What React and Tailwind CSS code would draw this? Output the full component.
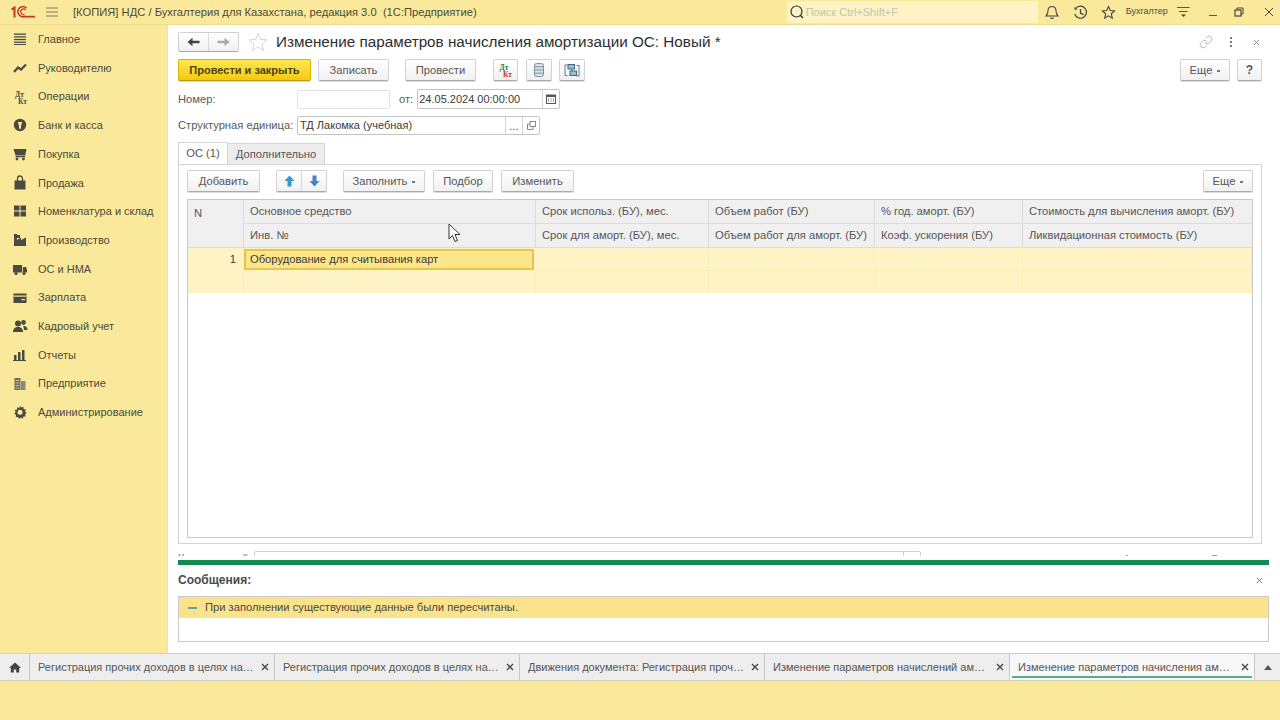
import React from "react";
import { Link } from "lucide-react";

const Ico = ({ children, w = 16, h = 16, vb = "0 0 16 16", cls = "" }) => (
  <svg width={w} height={h} viewBox={vb} className={cls}>{children}</svg>
);

const sideIcons = {
  main: <g fill="#4a4a40"><rect x="2" y="2.500" width="12" height="1.300"/><rect x="2" y="5.200" width="12" height="1.300"/><rect x="2" y="7.900" width="12" height="1.300"/><rect x="2" y="10.600" width="12" height="1.300"/><rect x="2" y="13" width="12" height="1"/></g>,
  boss: <path d="M2 12 L6 7.500 L9 9.500 L14 4.500" fill="none" stroke="#4a4a40" strokeWidth="2.200"/>,
  ops: <g fill="#4a4a40"><text x="3" y="7.500" fontSize="7.500" fontWeight="700" fontFamily="Liberation Serif, serif">Дт</text><text x="6" y="14.500" fontSize="7.500" fontWeight="700" fontFamily="Liberation Serif, serif">Кт</text></g>,
  bank: <g><circle cx="8" cy="8" r="6.200" fill="#4a4a40"/><path d="M5.800 5h4.400L9 9v2.800H7V9z" fill="#fbe99b"/></g>,
  buy: <g fill="#4a4a40"><path d="M1.500 3h13l-1.300 6.500H3.600z"/><rect x="3.600" y="10" width="9.500" height="1.200"/><circle cx="5" cy="13" r="1.400"/><circle cx="11.500" cy="13" r="1.400"/></g>,
  sell: <g><rect x="2.500" y="5.500" width="11" height="9" fill="#4a4a40"/><path d="M5.500 6V3.500a2.500 2.500 0 0 1 5 0V6" fill="none" stroke="#4a4a40" strokeWidth="1.300"/></g>,
  nom: <g fill="#4a4a40"><rect x="2" y="2.500" width="5.500" height="5"/><rect x="8.500" y="2.500" width="5.500" height="5"/><rect x="2" y="8.500" width="5.500" height="5"/><rect x="8.500" y="8.500" width="5.500" height="5"/></g>,
  prod: <g fill="#4a4a40"><path d="M2 14V2h3v1h3v3H5v2l4-2.500V8l5-2.500V14z"/></g>,
  os: <g fill="#4a4a40"><rect x="1" y="4" width="9" height="7.500"/><path d="M10.800 6H14l1 2.500v3h-4.200z"/><circle cx="4" cy="12.500" r="1.600"/><circle cx="12" cy="12.500" r="1.600"/></g>,
  pay: <g><rect x="1.500" y="3.500" width="13" height="9.500" fill="#4a4a40"/><rect x="1.500" y="5.500" width="13" height="1.200" fill="#fbe99b"/><rect x="9.500" y="9" width="3.500" height="1.200" fill="#fbe99b"/></g>,
  hr: <g fill="#4a4a40"><circle cx="6" cy="5.500" r="3"/><path d="M1 14c0-3.500 2-5 5-5s5 1.500 5 5z"/><circle cx="11.500" cy="4.500" r="2.400"/><path d="M11 8c2.500-.5 4.500 1 4.500 4H12c0-1.500-.4-3-1-4z"/></g>,
  rep: <g fill="#4a4a40"><rect x="2" y="8" width="2.500" height="5"/><rect x="6" y="5" width="2.500" height="8"/><rect x="10" y="3" width="2.500" height="10"/><rect x="1" y="13" width="13" height="1"/></g>,
  ent: <g><rect x="2.500" y="2" width="6" height="12" fill="#6b6b60"/><rect x="9" y="5" width="4.500" height="9" fill="#8a8a78"/><path d="M3.500 4.500h4M3.500 7h4M3.500 9.500h4M3.500 12h4" stroke="#fbe99b" strokeWidth=".7"/></g>,
  adm: <g><path d="M8 1.500l1.100 2 2.200-.7.300 2.300 2.300.4-.8 2.200 1.800 1.300-1.800 1.300.6 2.200-2.300.1-.6 2.200-2-1.200-1.800 1.400-1-2.100-2.300.2.400-2.300-2-1.100 1.600-1.600-1-2.100 2.300-.4.300-2.300 2.200.8z" fill="#4a4a40"/><circle cx="8" cy="8.300" r="2.500" fill="#fbe99b"/></g>,
};

const sideItems = [
  ["Главное", "main"], ["Руководителю", "boss"], ["Операции", "ops"], ["Банк и касса", "bank"],
  ["Покупка", "buy"], ["Продажа", "sell"], ["Номенклатура и склад", "nom"], ["Производство", "prod"],
  ["ОС и НМА", "os"], ["Зарплата", "pay"], ["Кадровый учет", "hr"], ["Отчеты", "rep"],
  ["Предприятие", "ent"], ["Администрирование", "adm"],
];

const Btn = ({ children, cls = "" }) => (
  <div className={`h-[22px] flex items-center justify-center rounded-[2px] border border-[#d2d2d2] border-b-[#aaaaaa] bg-gradient-to-b from-white to-[#f1f1f1] text-[#555] shadow-[0_1px_0_#dcdcdc] ${cls}`}>
    {children}
  </div>
);

const Caret = () => <span className="ml-[5px] mt-[1px] w-[3px] h-[2px] bg-[#777]" />;

const Cross = ({ s = 8, c = "#666", w = 1.1 }) => (
  <svg width={s} height={s} viewBox="0 0 8 8"><path d="M1 1l6 6M7 1l-6 6" stroke={c} strokeWidth={w} /></svg>
);

const cols = "grid-cols-[56px_292px_173px_166px_148px_1fr]";
const HCell = ({ children, cls = "" }) => (
  <div className={`flex items-center pl-[6px] border-r border-b border-[#dcdcdc] text-[#555] whitespace-nowrap ${cls}`}>{children}</div>
);

const tabs = [
  "Регистрация прочих доходов в целях начисления",
  "Регистрация прочих доходов в целях начисления",
  "Движения документа: Регистрация прочих доходов",
  "Изменение параметров начислений амортизации",
  "Изменение параметров начисления амортизации",
];

export default function App() {
  return (
    <div className="relative w-[1280px] h-[720px] overflow-hidden flex flex-col bg-[#fbe99b] text-[11.2px] text-[#444] font-['Liberation_Sans',Arial,sans-serif]">
      {/* Header */}
      <div className="h-[25px] shrink-0 flex items-center border-b border-[#efdc8e] bg-[#fbe99b]">
        <svg width="24" height="12" viewBox="0 0 24 12" className="ml-[11px]">
          <path d="M0.500 3.500L3.500 1.500V11.500" fill="none" stroke="#c8351e" strokeWidth="2" />
          <path d="M15.500 2.200A5 5 0 1 0 13 10.500" fill="none" stroke="#c8351e" strokeWidth="1.500" />
          <path d="M14.500 4A2.700 2.700 0 1 0 13.500 8.200" fill="none" stroke="#c8351e" strokeWidth="1.200" />
          <rect x="12" y="9.800" width="12" height="1.700" fill="#c8351e" />
        </svg>
        <svg width="12" height="10" viewBox="0 0 12 10" className="ml-[11px]">
          <path d="M0 1h12M0 5h12M0 9h12" stroke="#77776a" strokeWidth="1" />
        </svg>
        <div className="ml-[15px] text-[#4a4a3a] whitespace-pre">[КОПИЯ] НДС / Бухгалтерия для Казахстана, редакция 3.0  (1С:Предприятие)</div>
        <div className="ml-[310px] w-[251px] h-[22px] flex items-center rounded-[2px] bg-[#fdf3c5]">
          <svg width="16" height="16" viewBox="0 0 16 16" className="ml-[2px]">
            <circle cx="7.500" cy="7.500" r="5.500" fill="none" stroke="#333" strokeWidth="1.200" />
            <path d="M11.500 11.500l2.500 2.500" stroke="#333" strokeWidth="1.400" />
          </svg>
          <span className="ml-[1px] text-[11px] text-[#c6c3ae]">Поиск Ctrl+Shift+F</span>
        </div>
        <svg width="14" height="15" viewBox="0 0 14 15" className="ml-[7px]">
          <path d="M7 1.500c-2.500 0-4 1.800-4 4.300 0 3-1 4.200-2 5.200h12c-1-1-2-2.200-2-5.200 0-2.500-1.500-4.300-4-4.300zM5.500 12.500a1.600 1.600 0 0 0 3 0" fill="none" stroke="#444" strokeWidth="1.100" />
        </svg>
        <svg width="15" height="15" viewBox="0 0 15 15" className="ml-[14px]">
          <path d="M2.700 3.500A6 6 0 1 1 1.700 9" fill="none" stroke="#444" strokeWidth="1.200" />
          <path d="M1.500 1.800v3h3z" fill="#444" />
          <path d="M7.500 4v4l3 1.600" fill="none" stroke="#444" strokeWidth="1.300" />
        </svg>
        <svg width="15" height="15" viewBox="0 0 15 15" className="ml-[13px]">
          <path d="M7.500 1.500l1.800 4 4.300.4-3.300 2.900 1 4.300-3.800-2.300-3.800 2.300 1-4.300L1.400 5.900l4.300-.4z" fill="none" stroke="#444" strokeWidth="1.100" />
        </svg>
        <span className="ml-[10px] text-[9px] text-[#4a4a3a] w-[43px] whitespace-nowrap">Бухгалтер</span>
        <svg width="13" height="12" viewBox="0 0 13 12" className="ml-[8px]">
          <path d="M0 1.500h12.500M2 5.500h8.500" stroke="#555" strokeWidth="1" /><path d="M4 8.500h5l-2.500 2.500z" fill="#444" />
        </svg>
        <span className="ml-[19px] mt-[6px] w-[8px] h-[1px] bg-[#555]" />
        <svg width="10" height="10" viewBox="0 0 10 10" className="ml-[17px]">
          <rect x="1" y="3" width="6" height="6" fill="none" stroke="#444" strokeWidth="1.200" /><path d="M3 3V1h6v6H7" fill="none" stroke="#444" strokeWidth="1" />
        </svg>
        <svg width="10" height="10" viewBox="0 0 10 10" className="ml-[20px]"><path d="M1 1l8 8M9 1l-8 8" stroke="#444" strokeWidth="1" /></svg>
      </div>

      {/* Middle */}
      <div className="h-[628px] shrink-0 flex">
        <nav className="w-[168px] shrink-0 border-r border-[#e9e1b8] flex flex-col text-[11px]">
          {sideItems.map(([t, k]) => (
            <div key={t} className="h-[28.7px] shrink-0 flex items-center text-[#4a4a3a] whitespace-nowrap">
              <Ico cls="ml-[12px]">{sideIcons[k]}</Ico>
              <span className="ml-[10px]">{t}</span>
            </div>
          ))}
        </nav>

        <main className="flex-1 min-w-0 bg-white flex flex-col">
          <div className="h-[531px] shrink-0 overflow-hidden pl-[10px] pr-[18px]">
            {/* title row */}
            <div className="h-[20px] mt-[7px] flex items-center">
              <div className="w-[61px] h-[20px] flex rounded-[2px] border border-[#d0d0d0] border-b-[#a8a8a8] bg-gradient-to-b from-white to-[#f1f1f1]">
                <div className="w-[30px] flex items-center justify-center border-r border-[#d8d8d8]">
                  <svg width="13" height="10" viewBox="0 0 13 10"><path d="M0.500 5L5.500 0.800V3.800H12.500V6.200H5.500V9.200z" fill="#444" /></svg>
                </div>
                <div className="flex-1 flex items-center justify-center">
                  <svg width="13" height="10" viewBox="0 0 13 10"><path d="M12.500 5L7.500 0.800V3.800H0.500V6.200H7.500V9.200z" fill="#aaaaaa" /></svg>
                </div>
              </div>
              <svg width="20" height="20" viewBox="0 0 20 20" className="ml-[9px]">
                <path d="M10 1.500l2.500 6 6.500.4-5 4.200 1.600 6.400-5.600-3.500-5.600 3.500 1.600-6.400-5-4.200 6.500-.4z" fill="none" stroke="#d4d4d4" strokeWidth="1" />
              </svg>
              <h1 className="ml-[8px] text-[15.25px] leading-[20px] text-[#2e2e2e] whitespace-nowrap font-normal">Изменение параметров начисления амортизации ОС: Новый *</h1>
              <div className="ml-auto flex items-center mr-[2px]">
                <Link size={14} strokeWidth={1.3} color="#a0a0a0" />
                <svg width="4" height="10" viewBox="0 0 4 10" className="ml-[16px]"><g fill="#777"><rect x="1" y="0" width="2" height="2" /><rect x="1" y="4" width="2" height="2" /><rect x="1" y="8" width="2" height="2" /></g></svg>
                <span className="ml-[20px] flex"><Cross s={7} c="#888" /></span>
              </div>
            </div>

            {/* command bar */}
            <div className="mt-[7px] h-[22px] flex items-center">
              <div className="w-[133px] h-[22px] flex items-center justify-center rounded-[2px] border border-[#d6b400] border-b-[#b89b10] bg-gradient-to-b from-[#fde84a] to-[#f6c900] font-bold text-[11px] text-[#4a4215] shadow-[0_1px_0_#d8d8d8]">Провести и закрыть</div>
              <Btn cls="w-[71px] ml-[7px]">Записать</Btn>
              <Btn cls="w-[71px] ml-[16px]">Провести</Btn>
              <Btn cls="w-[25px] ml-[17px]">
                <svg width="15" height="15" viewBox="0 0 15 15"><text x="1.500" y="7" fontSize="7.500" fontWeight="700" fontFamily="Liberation Serif, serif" fill="#2d7d3a">Дт</text><text x="5" y="13.500" fontSize="7.500" fontWeight="700" fontFamily="Liberation Serif, serif" fill="#c8351e">Кт</text></svg>
              </Btn>
              <Btn cls="w-[26px] ml-[8px]">
                <svg width="12" height="16" viewBox="0 0 12 16"><rect x="1.500" y="1.500" width="9" height="13" rx="2" fill="#d6e3ea" stroke="#7b95a3" /><path d="M1.500 4.800h9M1.500 8h9M1.500 11.200h9" stroke="#7b95a3" /></svg>
              </Btn>
              <Btn cls="w-[26px] ml-[7px]">
                <svg width="16" height="15" viewBox="0 0 16 15"><path d="M3.500 2H1v10.500h2.500M12.500 2.500H15V13h-2.500" fill="none" stroke="#5d8296" /><rect x="4" y="1.500" width="6.500" height="4.500" fill="#9fbccb" stroke="#3f6b82" /><rect x="6" y="8" width="6.500" height="4.500" fill="#9fbccb" stroke="#3f6b82" /><path d="M8 6v2" stroke="#3f6b82" /></svg>
              </Btn>
              <Btn cls="w-[50px] ml-auto mr-[7px]">Еще<Caret /></Btn>
              <Btn cls="w-[25px] font-bold text-[12px]">?</Btn>
            </div>

            {/* number/date */}
            <div className="mt-[8px] h-[20px] flex items-center">
              <span className="w-[119px] text-[#5a5a5a]">Номер:</span>
              <div className="w-[93px] h-[19px] rounded-[2px] border border-[#e4e4e4]" />
              <span className="ml-[9px] text-[#5a5a5a]">от:</span>
              <div className="ml-[4px] w-[143px] h-[20px] flex rounded-[2px] border border-[#c4c4c4]">
                <span className="flex-1 pl-[1px] text-[11px] leading-[18px] text-[#3a3a3a] whitespace-nowrap">24.05.2024 00:00:00</span>
                <span className="w-[17px] border-l border-[#d4d4d4] flex items-center justify-center">
                  <svg width="10" height="10" viewBox="0 0 10 10"><rect x="0.500" y="1" width="9" height="8.500" fill="none" stroke="#555" /><rect x="0.500" y="1" width="9" height="2" fill="#555" /><path d="M2 5h1M4.500 5h1M7 5h1M2 7h1M4.500 7h1M7 7h1" stroke="#555" /></svg>
                </span>
              </div>
            </div>

            {/* unit */}
            <div className="mt-[7px] h-[19px] flex items-center">
              <span className="w-[119px] text-[#5a5a5a] whitespace-nowrap">Структурная единица:</span>
              <div className="w-[243px] h-[19px] flex rounded-[2px] border border-[#c4c4c4]">
                <span className="flex-1 pl-[2px] text-[11px] leading-[17px] text-[#3a3a3a]">ТД Лакомка (учебная)</span>
                <span className="w-[17px] border-l border-[#d4d4d4] text-center leading-[19px] text-[#555]">...</span>
                <span className="w-[17px] border-l border-[#d4d4d4] flex items-center justify-center">
                  <svg width="9" height="9" viewBox="0 0 9 9"><rect x="3" y="0.500" width="5.500" height="5" fill="none" stroke="#888" /><path d="M3 3H0.500V8.500H6V5.500" fill="none" stroke="#888" /></svg>
                </span>
              </div>
            </div>

            {/* Tabs */}
            <div className="mt-[8px] h-[21px] flex items-end relative z-10">
              <div className="w-[50px] h-[22px] flex items-center justify-center border border-b-0 border-[#d4d4d4] bg-white text-[#555]">ОС (1)</div>
              <div className="w-[97px] h-[21px] flex items-center justify-center border border-l-0 border-b-0 border-[#d4d4d4] bg-[#ececec] text-[#555]">Дополнительно</div>
            </div>

            {/* Tab panel */}
            <div className="h-[380px] border border-[#d4d4d4] pl-[8px] pr-[8px]">
              <div className="h-[22px] mt-[5px] flex items-center">
                <Btn cls="w-[73px]">Добавить</Btn>
                <div className="ml-[16px] w-[51px] h-[22px] flex rounded-[2px] border border-[#d2d2d2] border-b-[#aaaaaa] bg-gradient-to-b from-white to-[#f1f1f1] shadow-[0_1px_0_#dcdcdc]">
                  <span className="flex-1 flex items-center justify-center border-r border-[#d8d8d8]">
                    <svg width="11" height="12" viewBox="0 0 11 12"><path d="M5.500 0.500L10.500 6H7.500V11.500H3.500V6H0.500z" fill="#2f9bd1" /></svg>
                  </span>
                  <span className="flex-1 flex items-center justify-center">
                    <svg width="11" height="12" viewBox="0 0 11 12"><path d="M5.500 11.500L10.500 6H7.500V0.500H3.500V6H0.500z" fill="#3f85c8" /></svg>
                  </span>
                </div>
                <Btn cls="ml-[16px] w-[82px]">Заполнить<Caret /></Btn>
                <Btn cls="ml-[8px] w-[60px]">Подбор</Btn>
                <Btn cls="ml-[8px] w-[73px]">Изменить</Btn>
                <Btn cls="ml-auto w-[50px]">Еще<Caret /></Btn>
              </div>

              <div className="mt-[7px] h-[339px] border border-[#c8c8c8] overflow-hidden">
                <div className={`grid ${cols} grid-rows-[24px_24px] bg-[#f0f0f0]`}>
                  <HCell cls="row-span-2 items-start pt-[5px]">N</HCell>
                  <HCell>Основное средство</HCell>
                  <HCell>Срок использ. (БУ), мес.</HCell>
                  <HCell>Объем работ (БУ)</HCell>
                  <HCell>% год. аморт. (БУ)</HCell>
                  <HCell cls="border-r-0">Стоимость для вычисления аморт. (БУ)</HCell>
                  <HCell>Инв. №</HCell>
                  <HCell>Срок для аморт. (БУ), мес.</HCell>
                  <HCell>Объем работ для аморт. (БУ)</HCell>
                  <HCell>Коэф. ускорения (БУ)</HCell>
                  <HCell cls="border-r-0">Ликвидационная стоимость (БУ)</HCell>
                </div>
                <div className={`grid ${cols} grid-rows-[23px_22px] bg-[#fef3c4] text-[#3a3a3a]`}>
                  <div className="row-span-2 text-right pr-[7px] leading-[23px] border-r border-[#fbeeb5]">1</div>
                  <div className="flex items-center pl-[4px] mr-[2px] my-[1px] border-2 border-[#e8c44e] bg-[#fde68a] whitespace-nowrap">Оборудование для считывания карт</div>
                  {[0, 1, 2, 3].map((i) => (
                    <div key={i} className="border-r border-b border-[#fbeeb5]" />
                  ))}
                  {[0, 1, 2, 3, 4].map((i) => (
                    <div key={i} className="border-r border-[#fbeeb5]" />
                  ))}
                </div>
              </div>
            </div>

            {/* row clipped by the messages panel */}
            <div className="mt-[7px] h-[20px] flex items-start">
              <span className="w-[76px] mt-[1px] leading-[13px] text-[#777] whitespace-nowrap">Комментарий:</span>
              <div className="w-[667px] h-[20px] flex justify-end rounded-[2px] border border-[#d0d0d0]">
                <span className="w-[17px] border-l border-[#d0d0d0]" />
              </div>
              <span className="ml-auto mr-[84px] mt-[4px] w-[2px] h-[1px] bg-[#aaa]" />
              <span className="mr-[45px] mt-[4px] w-[5px] h-[1px] bg-[#999]" />
            </div>
          </div>

          {/* Green bar */}
          <div className="ml-[10px] mr-[11px] mt-[4px] h-[5px] shrink-0 bg-[#118a50]" />

          {/* Messages */}
          <div className="ml-[10px] mr-[11px] h-[31px] shrink-0 flex items-center justify-between">
            <span className="font-bold text-[12px] text-[#4a4a4a] pb-[2px]">Сообщения:</span>
            <span className="mr-[6px] flex"><Cross s={7} c="#777" /></span>
          </div>
          <div className="ml-[10px] mr-[11px] h-[46px] shrink-0 border border-[#c8c8c8]">
            <div className="h-[21px] bg-[#fbe38c] flex items-center">
              <span className="ml-[9px] w-[9px] h-[2px] bg-[#5aa7a0]" />
              <span className="ml-[8px] text-[#4a4a3a]">При заполнении существующие данные были пересчитаны.</span>
            </div>
          </div>
        </main>
      </div>

      {/* Bottom tabs */}
      <div className="h-[28px] shrink-0 flex bg-[#eeeeee] border-t border-b border-[#cfcfc4] text-[11px]">
        <div className="w-[30px] shrink-0 flex items-center justify-center border-r border-[#c8c8c8]">
          <svg width="12" height="11" viewBox="0 0 12 11"><path d="M6 0.500L0 6h1.800v4.500h3V7.500h2.400v3h3V6H12z" fill="#444" /></svg>
        </div>
        {tabs.map((t, i) => {
          const active = i === 4;
          return (
            <div key={i} className={`w-[245px] shrink-0 relative flex items-center pl-[8px] pr-[5px] border-r border-[#c8c8c8] ${active ? "bg-[#f8f8f8]" : ""}`}>
              <span className="flex-1 min-w-0 truncate text-[#555]">{t}</span>
              <span className="ml-[6px] flex"><Cross s={8} c="#444" w={1.3} /></span>
              {active && <span className="absolute left-[2px] right-[2px] bottom-[2px] h-[2px] bg-[#5aa98a]" />}
            </div>
          );
        })}
        <div className="flex-1 flex items-center justify-center">
          <svg width="8" height="5" viewBox="0 0 8 5"><path d="M4 0l4 5H0z" fill="#555" /></svg>
        </div>
      </div>

      {/* Mouse cursor */}
      <svg width="13" height="21" viewBox="0 0 13 21" className="absolute left-[448px] top-[223px]">
        <path d="M1 1v15l3.500-3.500 2.500 6 2.500-1-2.500-6h5z" fill="#fff" stroke="#333" strokeWidth="1" />
      </svg>
    </div>
  );
}
